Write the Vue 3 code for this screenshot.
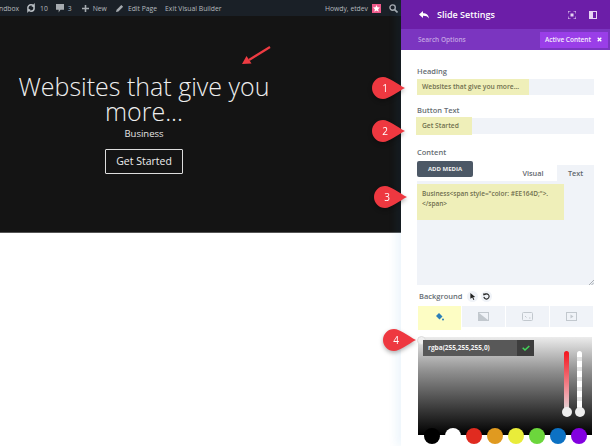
<script setup>
const swatches = ['#000000', '#ffffff', '#e02b20', '#e09a20', '#e9ec3a', '#6cd63c', '#0c71c3', '#8300e0']
const bgTabs = ['fill', 'image', 'gradient', 'video']
const pins = [
  { n: 1, cls: 'p1' },
  { n: 2, cls: 'p2' },
  { n: 3, cls: 'p3' },
  { n: 4, cls: 'p4' }
]
</script>

<template>
  <div class="page">
    <div class="left">
      <div class="adminbar">
        <span class="clip">ndbox</span>
        <span class="ab-item i1">
          <svg width="10" height="10" viewBox="0 0 12 12"><circle cx="6" cy="6" r="3.800" fill="none" stroke="#b9bec3" stroke-width="1.800"/><path d="M10.500 0v4.500H6.500zM1.500 12V7.500h4z" fill="#b9bec3"/></svg>
          10
        </span>
        <span class="ab-item i2">
          <svg width="8" height="9" viewBox="0 0 9 10"><path d="M0 0h9v6.500H5L3 9.500V6.500H0z" fill="#a6abb0"/></svg>
          3
        </span>
        <span class="ab-item i3">
          <svg width="7" height="7" viewBox="0 0 9 9"><path d="M3.500 0h2v3.500H9v2H5.500V9h-2V5.500H0v-2h3.500z" fill="#a6abb0"/></svg>
          New
        </span>
        <span class="ab-item i4">
          <svg width="8" height="8" viewBox="0 0 9 9"><path d="M0 9l.7-2.600L6 1l2 2-5.300 5.300z" fill="#a6abb0"/></svg>
          Edit Page
        </span>
        <span class="ab-item i5">Exit Visual Builder</span>
        <span class="howdy">Howdy, etdev</span>
        <span class="avatar">
          <svg width="7" height="7" viewBox="0 0 10 10"><path d="M5 0l1.400 3.300L10 3.600 7.300 6l.8 3.500L5 7.700 1.900 9.500 2.700 6 0 3.600l3.600-.3z" fill="#fff"/></svg>
        </span>
        <svg class="search" width="9" height="9" viewBox="0 0 9 9"><circle cx="3.600" cy="3.600" r="2.700" fill="none" stroke="#a6abb0" stroke-width="1.400"/><path d="M5.600 5.600L8.500 8.500" stroke="#a6abb0" stroke-width="1.600"/></svg>
      </div>
      <div class="hero">
        <h1 class="headline">Websites that give you more...</h1>
        <p class="sub">Business</p>
        <a class="cta">Get Started</a>
      </div>
    </div>

    <aside class="panel">
      <header class="phead">
        <svg class="back" width="10" height="8" viewBox="0 0 10 8"><path d="M4 0v2.200c3.500 0 5.500 1.500 6 5.300C8.800 5.500 7 4.800 4 4.800V7L0 3.500z" fill="#fff"/></svg>
        <span class="ptitle">Slide Settings</span>
        <svg class="pi1" width="8" height="8" viewBox="0 0 8 8"><path d="M0 2.500V0h2.500M5.500 0H8v2.500M8 5.500V8H5.500M2.500 8H0V5.500" fill="none" stroke="#e6d5f2" stroke-width="1"/><rect x="2.500" y="2.500" width="3" height="3" fill="#e6d5f2"/></svg>
        <svg class="pi2" width="8" height="8" viewBox="0 0 8 8"><rect x=".5" y=".5" width="7" height="7" fill="none" stroke="#e6d5f2"/><rect x="1" y="1" width="3" height="6" fill="#e6d5f2"/></svg>
      </header>
      <div class="psub">
        <span class="search-opt">Search Options</span>
        <span class="active">Active Content
          <svg width="5" height="5" viewBox="0 0 5 5"><path d="M.7.700l3.600 3.600M4.300.700L.7 4.300" stroke="#fff" stroke-width="1.300"/></svg>
        </span>
      </div>

      <div class="pbody">
        <label class="lbl">Heading</label>
        <div class="field"><span class="hl h1">Websites that give you more...</span></div>

        <label class="lbl l2">Button Text</label>
        <div class="field"><span class="hl h2">Get Started</span></div>

        <label class="lbl l3">Content</label>
        <div class="editor-top">
          <span class="media">ADD MEDIA</span>
          <span class="etab visual">Visual</span>
          <span class="etab text">Text</span>
        </div>
        <div class="textarea">
          <div class="hl-area">Business&lt;span style="color: #EE164D;"&gt;.<br>&lt;/span&gt;</div>
          <svg class="grip" width="5" height="5" viewBox="0 0 5 5"><path d="M0 5L5 0M2.500 5L5 2.500" stroke="#8a8f95" stroke-width=".7"/></svg>
        </div>

        <div class="bg-row">
          <span class="lbl bgl">Background</span>
          <span class="round">
            <svg width="6" height="7" viewBox="0 0 6 8"><path d="M0 0l5.500 4.500-2.300.3L4.500 7.500l-1.100.5-1.200-2.800L0 6.500z" fill="#222"/></svg>
          </span>
          <span class="round">
            <svg width="7" height="7" viewBox="0 0 8 8"><path d="M1.500 2.200A3 3 0 1 1 1 4.500" fill="none" stroke="#222" stroke-width="1.300"/><path d="M0 .5l3.200.4L.8 3.200z" fill="#222"/></svg>
          </span>
        </div>
        <div class="bg-tabs">
          <span v-for="t in bgTabs" :key="t" class="bg-tab" :class="{ on: t === 'fill' }">
            <svg v-if="t === 'fill'" width="9" height="9" viewBox="0 0 9 9"><path d="M1 4l3-3 3.500 3.500-3 3z" fill="#2c7fb8"/><circle cx="8" cy="7.500" r="1" fill="#2c7fb8"/></svg>
            <svg v-else-if="t === 'image'" width="11" height="9" viewBox="0 0 11 9"><rect x=".5" y=".5" width="10" height="8" fill="none" stroke="#c2c8ce"/><path d="M1 1l9 7H1z" fill="#c2c8ce"/></svg>
            <svg v-else-if="t === 'gradient'" width="11" height="9" viewBox="0 0 11 9"><rect x=".5" y=".5" width="10" height="8" rx="1" fill="none" stroke="#c2c8ce"/><path d="M3 4l1.500 1.500M7 6h1.500" stroke="#c2c8ce"/></svg>
            <svg v-else width="11" height="9" viewBox="0 0 11 9"><rect x=".5" y=".5" width="10" height="8" fill="none" stroke="#c2c8ce"/><path d="M4.500 2.500l3 2-3 2z" fill="#c2c8ce"/></svg>
          </span>
        </div>

        <div class="picker">
          <span class="knob"></span>
          <div class="hex">
            <span class="hex-val">rgba(255,255,255,0)</span>
            <span class="ok">
              <svg width="8" height="6" viewBox="0 0 8 6"><path d="M.7 2.800L3 5 7.300 1" fill="none" stroke="#43d65a" stroke-width="1.500"/></svg>
            </span>
          </div>
          <span class="slider hue"><i></i></span>
          <span class="slider alpha"><i></i></span>
        </div>
      </div>
      <div class="swatches">
        <span v-for="c in swatches" :key="c" class="sw" :style="{ background: c }"></span>
      </div>
    </aside>

    <svg class="arrow" width="36" height="26" viewBox="0 0 36 26">
      <path d="M30 3L9 16" stroke="#ee3b42" stroke-width="2.200" fill="none"/>
      <path d="M2 20l4.500-8 5 7.500z" fill="#ee3b42"/>
    </svg>

    <div v-for="p in pins" :key="p.n" class="pin" :class="p.cls">
      <svg width="33" height="22" viewBox="0 0 33 22"><path d="M11 0C17 0 25 7 33 11 25 15 17 22 11 22a11 11 0 0 1 0-22z" fill="#ee3840"/></svg>
      <span class="pin-n">{{ p.n }}</span>
    </div>
  </div>
</template>

<style scoped>
.page {
  position: relative;
  display: flex;
  width: 610px;
  height: 446px;
  overflow: hidden;
  background: #fff;
  font-family: "Open Sans", "Liberation Sans", sans-serif;
}
.left { width: 401px; flex: none; }
.adminbar {
  display: flex;
  align-items: center;
  height: 16px;
  background: #1a2027;
  color: #b4b9be;
  font-size: 6.800px;
  white-space: nowrap;
  overflow: hidden;
}
.clip { margin-left: -1px; width: 27px; }
.ab-item { display: inline-flex; align-items: center; gap: 4px; }
.i2 { margin-left: 8px; }
.i3 { margin-left: 10px; }
.i4 { margin-left: 9px; }
.i5 { margin-left: 8px; }
.howdy { margin-left: auto; }
.avatar {
  display: flex; align-items: center; justify-content: center;
  width: 9px; height: 9px; margin-left: 4px; background: #ee5a8a;
}
.search { margin-left: 8px; margin-right: 3px; }
.hero {
  height: 217px;
  background: #141414;
  color: #eee;
  text-align: center;
  padding: 58px 113px 0 0;
  box-sizing: border-box;
  border-bottom: 1px solid #555;
}
.headline {
  margin: 0 auto;
  width: 288px;
  font-size: 25px;
  line-height: 24.500px;
  font-weight: 300;
  color: #eeeeee;
}
.sub { margin: 4px 0 0; font-size: 9.500px; line-height: 13px; color: #e4e4e4; }
.cta {
  display: block;
  margin: 9px auto 0;
  width: 78px;
  height: 25px;
  line-height: 23px;
  box-sizing: border-box;
  border: 1px solid #ddd;
  border-radius: 1px;
  font-size: 10.500px;
  color: #eee;
}
.panel {
  position: relative;
  width: 209px;
  flex: none;
  background: #fff;
  box-shadow: -5px 0 8px rgba(43, 135, 218, .08);
}
.phead {
  display: flex;
  align-items: center;
  height: 29px;
  background: #6c1ea8;
  color: #fff;
}
.back { margin-left: 18px; }
.ptitle { margin-left: 8px; font-size: 9px; font-weight: 600; }
.pi1 { margin-left: 73px; }
.pi2 { margin-left: 13px; }
.psub {
  display: flex;
  align-items: center;
  justify-content: space-between;
  height: 21px;
  padding: 0 2px 0 17px;
  background: #7b35c0;
  font-size: 6.500px;
}
.search-opt { color: #c3a2e3; font-weight: 600; }
.active {
  display: flex; align-items: center; justify-content: space-between;
  width: 68px; height: 16px;
  padding: 0 6px 0 5px;
  box-sizing: border-box;
  background: #9a3ee8;
  color: #f5ecfc;
  font-weight: 600;
}
.pbody { padding: 17px 16px 0 16px; }
.lbl {
  display: block;
  font-size: 7.500px;
  line-height: 9px;
  font-weight: 600;
  color: #666d73;
}
.l2 { margin-top: 11px; }
.l3 { margin-top: 14px; }
.field {
  display: flex;
  height: 16px;
  margin-top: 3px;
  background: #f0f3f8;
}
.hl {
  display: block;
  height: 100%;
  background: #efefb9;
  color: #70704f;
  font-size: 6.700px;
  font-weight: 600;
  line-height: 16px;
  padding-left: 5px;
  box-sizing: border-box;
  white-space: nowrap;
}
.h1 { width: 112px; }
.h2 { width: 56px; margin-left: -1px; padding-left: 6px; height: 18px; margin-top: -1px; line-height: 18px; }
.editor-top { position: relative; height: 20px; margin-top: 4px; }
.media {
  position: absolute;
  left: 0; top: 0;
  width: 56px; height: 16px;
  border-radius: 2px;
  background: #4c5866;
  color: #f0f0f0;
  font-size: 6px;
  font-weight: 700;
  line-height: 16px;
  text-align: center;
}
.etab {
  position: absolute;
  top: 4px;
  height: 16px;
  line-height: 17px;
  font-size: 7.300px;
  font-weight: 600;
  color: #5f666c;
  text-align: center;
}
.visual { left: 95px; width: 42px; background: #fff; }
.text { left: 140px; width: 37px; background: #f0f3f8; }
.textarea {
  position: relative;
  height: 104px;
  background: #f0f3f8;
  padding-top: 3px;
  box-sizing: border-box;
}
.grip { position: absolute; right: 0; bottom: 0; }
.hl-area {
  width: 147px;
  height: 36px;
  box-sizing: border-box;
  padding: 5px 5px;
  background: #efefb9;
  color: #70704f;
  font-size: 6.500px;
  font-weight: 600;
  line-height: 9.500px;
  white-space: nowrap;
}
.bg-row { display: flex; align-items: center; gap: 3px; margin-top: 4px; margin-left: 2px; height: 14px; }
.bgl { margin-right: 2px; }
.round {
  display: flex; align-items: center; justify-content: center;
  width: 11px; height: 11px; border-radius: 50%; background: #f0f3f8;
}
.bg-tabs {
  display: flex;
  gap: 1px;
  width: 175px;
  height: 21px;
  margin: 3px 0 0 1px;
}
.bg-tab {
  flex: 1;
  display: flex; align-items: center; justify-content: center;
  background: #f0f3f8;
}
.bg-tab.on { background: #fdfdc4; height: 24px; padding-bottom: 3px; box-sizing: border-box; }
.picker {
  position: relative;
  width: 174px;
  height: 98px;
  margin: 10px 0 0 1px;
  background: linear-gradient(#ececec 0%, #8f8f8f 35%, #363636 75%, #000 100%);
}
.knob {
  position: absolute; left: -1px; top: -1px;
  width: 9px; height: 9px; border-radius: 50%;
  background: #f0f0f0; border: 1px solid #ddd; box-sizing: border-box;
}
.hex {
  position: absolute; left: 5px; top: 3px;
  display: flex; width: 111px; height: 16px;
  background: #585858;
  color: #f2f2f2;
  font-size: 6.500px;
  font-weight: 700;
  line-height: 16px;
}
.hex-val { flex: 1; padding-left: 5px; }
.ok {
  display: flex; align-items: center; justify-content: center;
  width: 17px; background: #3d3d3d;
}
.slider {
  position: absolute; top: 14px;
  width: 5px; height: 62px;
  border-radius: 3px;
}
.slider i {
  position: absolute; left: -2.500px; bottom: -4px;
  width: 10px; height: 10px; border-radius: 50%;
  background: #eee;
}
.hue { left: 146px; background: linear-gradient(#f4141c, #f0a0a8 70%, #ddd); }
.alpha { left: 159px; background: repeating-linear-gradient(#fff 0 6px, #e2e2e2 6px 10px); }
.swatches {
  position: absolute;
  left: 23px;
  top: 428px;
  display: flex;
  gap: 5px;
}
.sw { width: 16px; height: 16px; border-radius: 50%; }
.arrow { position: absolute; left: 240px; top: 44px; }
.pin { position: absolute; width: 33px; height: 22px; filter: drop-shadow(0 2px 2px rgba(0,0,0,.3)); }
.pin svg { display: block; }
.pin-n {
  position: absolute; left: 0; top: 0; width: 26px;
  text-align: center;
  color: #fff;
  font-size: 10px;
  line-height: 22px;
}
.p1 { left: 372px; top: 77px; }
.p2 { left: 372px; top: 120px; }
.p3 { left: 374px; top: 186px; }
.p4 { left: 383px; top: 329px; }
</style>

<style>
html, body { margin: 0; background: #fff; }
</style>
